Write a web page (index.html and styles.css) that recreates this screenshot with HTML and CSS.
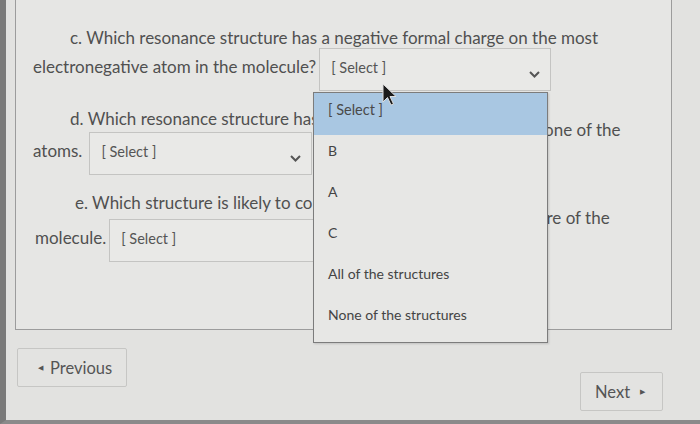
FILE: index.html
```html
<!DOCTYPE html>
<html lang="en">
<head>
<meta charset="utf-8">
<title>Quiz</title>
<link rel="stylesheet" href="styles.css">
</head>
<body>
<div class="page">
  <div class="qbox">
    <div class="qline q-c"><span class="qtext">c. Which resonance structure has a negative formal charge on the most</span></div>
    <div class="arow r-c">
      <span class="label">electronegative atom in the molecule?</span>
      <div class="select sel-c"><span>[ Select ]</span><svg class="chev" width="11" height="7" viewBox="0 0 11 7"><polyline points="1,1 5.5,5.5 10,1" fill="none" stroke="#555" stroke-width="2"/></svg></div>
    </div>

    <div class="qline q-d"><span class="qtext">d. Which resonance structure has</span><span class="tail tail-d">one of the</span></div>
    <div class="arow r-d">
      <span class="label">atoms.</span>
      <div class="select sel-d"><span>[ Select ]</span><svg class="chev" width="11" height="7" viewBox="0 0 11 7"><polyline points="1,1 5.5,5.5 10,1" fill="none" stroke="#555" stroke-width="2"/></svg></div>
    </div>

    <div class="qline q-e"><span class="qtext">e. Which structure is likely to con</span><span class="tail tail-e">ure of the</span></div>
    <div class="arow r-e">
      <span class="label">molecule.</span>
      <div class="select sel-e"><span>[ Select ]</span></div>
    </div>

    <ul class="dropdown">
      <li class="opt active">[ Select ]</li>
      <li class="opt">B</li>
      <li class="opt">A</li>
      <li class="opt">C</li>
      <li class="opt">All of the structures</li>
      <li class="opt">None of the structures</li>
    </ul>
    <svg class="cursor" width="16" height="24" viewBox="0 0 16 24"><path d="M1 1 L1 19 L5.5 14.5 L9 22 L11.5 21 L8 13.5 L14 13.5 Z" fill="#1a1a1a" stroke="#ddd" stroke-width="1"/></svg>
  </div>

  <div class="nav">
    <button class="btn prev"><span class="tri">&#9664;</span>Previous</button>
    <button class="btn next">Next<span class="tri">&#9654;</span></button>
  </div>
</div>
</body>
</html>
```

FILE: styles.css
```css
* { box-sizing: border-box; }
html, body {
  margin: 0;
  padding: 0;
}
body {
  width: 700px;
  height: 424px;
  overflow: hidden;
  background: #e2e2e0;
  font-family: Lato, "Open Sans", sans-serif;
  color: #505050;
}
.page {
  height: 424px;
  border-left: 6px solid #7a7a7a;
  border-bottom: 4px solid #8a8a8a;
  padding-left: 9px;
}
.qbox {
  position: relative;
  width: 657px;
  height: 330px;
  padding-top: 28px;
  border: 1px solid #9c9c9c;
  border-top: none;
  background: #e6e6e4;
}
.qline {
  display: grid;
  height: 20px;
  font-size: 17px;
  line-height: 20px;
  white-space: nowrap;
}
.qtext { padding-left: 54px; }
.q-c { grid-template-columns: 1fr; }
.q-d { margin-top: 18px; grid-template-columns: 528px 1fr; }
.q-e { margin-top: 18px; grid-template-columns: 521px 1fr; }
.q-e .qtext { padding-left: 59px; }
.tail { align-self: start; }
.tail-d { margin-top: 11px; }
.tail-e { margin-top: 15px; }

.arow {
  display: flex;
  align-items: flex-start;
  font-size: 17px;
  line-height: 20px;
  white-space: nowrap;
}
.label { padding-top: 9px; }
.r-c { margin-top: 0; padding-left: 17px; }
.r-c .label { margin-right: 3px; }
.r-d { margin-top: 3px; padding-left: 17px; }
.r-d .label { margin-right: 7px; }
.r-e { margin-top: 6px; padding-left: 19px; }
.r-e .label { margin-right: 3px; }

.select {
  display: flex;
  justify-content: space-between;
  align-items: flex-start;
  height: 43px;
  padding: 10px 10px 0 11px;
  border: 1px solid #c4c4c2;
  background: #e9e9e7;
  font-size: 14.5px;
  line-height: 18px;
  color: #555;
}
.sel-c { width: 232px; }
.sel-d { width: 223px; }
.sel-e { width: 205px; }
.chev { margin-top: 12px; }

.dropdown {
  position: absolute;
  left: 297px;
  top: 92px;
  width: 235px;
  height: 251px;
  margin: 0;
  padding: 0;
  list-style: none;
  background: #e7e7e5;
  border: 1px solid #7c7c7c;
  box-shadow: 1px 1px 2px rgba(0,0,0,0.15);
  font-size: 14px;
  color: #444;
}
.opt {
  height: 41px;
  padding: 7px 0 0 14px;
  line-height: 18px;
}
.opt.active {
  height: 42px;
  background: #a9c7e2;
  padding-top: 8px;
  font-size: 14.5px;
  color: #4a4a4a;
}
.cursor {
  position: absolute;
  left: 366px;
  top: 83px;
}

.nav {
  display: flex;
  justify-content: space-between;
  align-items: flex-start;
  width: 648px;
  margin-top: 18px;
  padding-left: 2px;
}
.btn {
  font-family: Lato, "Open Sans", sans-serif;
  font-size: 16.5px;
  color: #555;
  background: #e3e3e1;
  border: 1px solid #c6c6c4;
  border-radius: 2px;
  height: 39px;
  display: flex;
  align-items: center;
  padding: 0;
}
.prev { width: 110px; padding-left: 20px; }
.prev .tri { font-size: 7px; margin-right: 7px; }
.next { width: 83px; margin-top: 24px; padding-left: 14px; }
.next .tri { font-size: 7px; margin-left: 10px; }
```
